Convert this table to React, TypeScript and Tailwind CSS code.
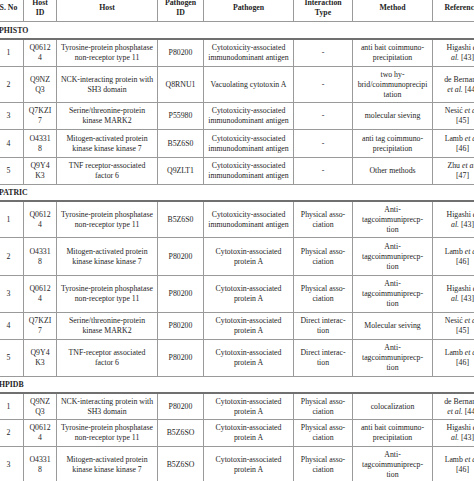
type Row = {
  no: string;
  h: number;
  hostId: string[];
  host: string[];
  pathId: string;
  path: string[];
  type: string[];
  method: string[];
  ref: string[];
};

const ANTI = ["Anti-", "tagcoimmuniprecp-", "tion"];
const PHYS = ["Physical asso-", "ciation"];
const DIRECT = ["Direct interac-", "tion"];
const CAPA = ["Cytotoxin-associated", "protein A"];
const CIAA = ["Cytotoxicity-associated", "immunodominant antigen"];
const TYR = ["Tyrosine-protein phosphatase", "non-receptor type 11"];
const MAP = ["Mitogen-activated protein", "kinase kinase kinase 7"];
const NCK = ["NCK-interacting protein with", "SH3 domain"];
const SER = ["Serine/threonine-protein", "kinase MARK2"];

// references: "Higashi", "Bernardi", "Nesic", "Lamb", "Zhu"
const PHISTO: Row[] = [
  { no: "1", h: 27, hostId: ["Q0612", "4"], host: TYR, pathId: "P80200", path: CIAA, type: ["-"], method: ["anti bait coimmuno-", "precipitation"], ref: ["Higashi", "[43]"] },
  { no: "2", h: 36, hostId: ["Q9NZ", "Q3"], host: NCK, pathId: "Q8RNU1", path: ["Vacuolating cytotoxin A"], type: ["-"], method: ["two hy-", "brid/coimmunoprecipi", "tation"], ref: ["Bernardi", "[44]"] },
  { no: "3", h: 27, hostId: ["Q7KZI", "7"], host: SER, pathId: "P55980", path: CIAA, type: ["-"], method: ["molecular sieving"], ref: ["Nesic", "[45]"] },
  { no: "4", h: 28, hostId: ["O4331", "8"], host: MAP, pathId: "B5Z6S0", path: CIAA, type: ["-"], method: ["anti tag coimmuno-", "precipitation"], ref: ["Lamb", "[46]"] },
  { no: "5", h: 27, hostId: ["Q9Y4", "K3"], host: ["TNF receptor-associated", "factor 6"], pathId: "Q9ZLT1", path: CIAA, type: ["-"], method: ["Other methods"], ref: ["Zhu", "[47]"] },
];

const PATRIC: Row[] = [
  { no: "1", h: 36, hostId: ["Q0612", "4"], host: TYR, pathId: "B5Z6S0", path: CIAA, type: PHYS, method: ANTI, ref: ["Higashi", "[43]"] },
  { no: "2", h: 38, hostId: ["O4331", "8"], host: MAP, pathId: "P80200", path: CAPA, type: PHYS, method: ANTI, ref: ["Lamb", "[46]"] },
  { no: "3", h: 37, hostId: ["Q0612", "4"], host: TYR, pathId: "P80200", path: CAPA, type: PHYS, method: ANTI, ref: ["Higashi", "[43]"] },
  { no: "4", h: 27, hostId: ["Q7KZI", "7"], host: SER, pathId: "P80200", path: CAPA, type: DIRECT, method: ["Molecular seiving"], ref: ["Nesic", "[45]"] },
  { no: "5", h: 37, hostId: ["Q9Y4", "K3"], host: ["TNF-receptor associated", "factor 6"], pathId: "P80200", path: CAPA, type: DIRECT, method: ANTI, ref: ["Lamb", "[46]"] },
];

const HPIDB: Row[] = [
  { no: "1", h: 26, hostId: ["Q9NZ", "Q3"], host: NCK, pathId: "P80200", path: CAPA, type: PHYS, method: ["colocalization"], ref: ["Bernardi", "[44]"] },
  { no: "2", h: 27, hostId: ["Q0612", "4"], host: TYR, pathId: "B5Z6SO", path: CAPA, type: PHYS, method: ["anti bait coimmuno-", "precipitation"], ref: ["Higashi", "[43]"] },
  { no: "3", h: 37, hostId: ["O4331", "8"], host: MAP, pathId: "B5Z6SO", path: CAPA, type: PHYS, method: ANTI, ref: ["Lamb", "[46]"] },
];

const GRID = "grid grid-cols-[29px_33px_101px_46px_90px_59px_80px_60px] border-b border-[#9a9a9a]";
const CELL = "flex flex-col items-center justify-center whitespace-nowrap text-center border-l border-[#9a9a9a] first:border-l-0";

function Cell({ lines }: { lines: React.ReactNode[] }) {
  return (
    <div className={CELL}>
      {lines.map((l, i) => (
        <div key={i}>{l}</div>
      ))}
    </div>
  );
}

function refLines(ref: string[]): React.ReactNode[] {
  const [who, num] = ref;
  if (who === "Higashi") return [<>Higashi <i>et</i></>, <><i>al.</i> {num}</>];
  if (who === "Bernardi") return ["de Bernardi", <><i>et al.</i> {num}</>];
  if (who === "Nesic") return [<>Nesić <i>et al.</i></>, num];
  return [<>{who} <i>et al.</i></>, num];
}

function Section({ name, h, rows }: { name: string; h: number; rows: Row[] }) {
  return (
    <>
      <div className="flex items-center border-b-2 border-[#707070] pl-[5px] pt-[1px] font-bold" style={{ height: h }}>
        {name}
      </div>
      {rows.map((r, i) => (
        <div key={i} className={GRID} style={{ height: r.h }}>
          <Cell lines={[r.no]} />
          <Cell lines={r.hostId} />
          <Cell lines={r.host} />
          <Cell lines={[r.pathId]} />
          <Cell lines={r.path} />
          <Cell lines={r.type} />
          <Cell lines={r.method} />
          <Cell lines={refLines(r.ref)} />
        </div>
      ))}
    </>
  );
}

export default function App() {
  return (
    <div className="h-[481px] w-[474px] overflow-hidden bg-white">
      <div
        className="-ml-[6px] -mt-[5px] w-[498px] text-[7.8px] leading-[10px] text-[#1e1e1e]"
        style={{ fontFamily: '"Liberation Serif", "Times New Roman", serif' }}
      >
        <div className={`${GRID} h-[27px] font-bold`}>
          <Cell lines={["S. No"]} />
          <Cell lines={["Host", "ID"]} />
          <Cell lines={["Host"]} />
          <Cell lines={["Pathogen", "ID"]} />
          <Cell lines={["Pathogen"]} />
          <Cell lines={["Interaction", "Type"]} />
          <Cell lines={["Method"]} />
          <Cell lines={["References"]} />
        </div>
        <Section name="PHISTO" h={18} rows={PHISTO} />
        <Section name="PATRIC" h={17} rows={PATRIC} />
        <Section name="HPIDB" h={17} rows={HPIDB} />
      </div>
    </div>
  );
}
